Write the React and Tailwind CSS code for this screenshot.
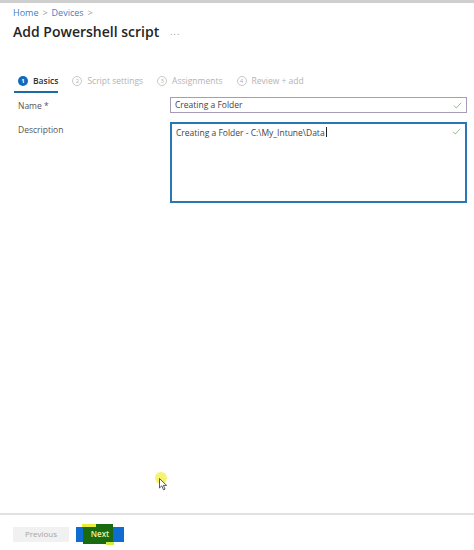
import React from 'react';

function Check() {
  return (
    <svg width="9" height="7" viewBox="0 0 9 7" className="shrink-0">
      <path d="M0.8 3.6 L3.3 6 L8.2 0.8" fill="none" stroke="#8fbf8f" strokeWidth="1" />
    </svg>
  );
}

function Step({ n, label, active }) {
  return (
    <div className="relative flex items-center gap-[5px] pb-[6px]">
      <span
        className={`flex h-[10px] w-[10px] items-center justify-center rounded-full text-[6px] leading-none ${
          active ? 'bg-[#0f6cbd] text-white font-bold' : 'border border-[#c8c8c8] text-[#b0b0b0]'
        }`}
      >
        {n}
      </span>
      <span className={active ? 'text-[#323130] font-semibold' : 'text-[#b3b3b3]'}>{label}</span>
      {active && <span className="absolute bottom-0 left-[-4px] right-0 h-[2px] bg-[#1a6aa8]" />}
    </div>
  );
}

export default function App() {
  return (
    <div className="flex h-[550px] w-[474px] flex-col bg-white font-['Open_Sans',sans-serif] text-[#323130]">
      <div className="h-[3px] bg-[#cfcfcf]" />

      <div className="px-[13px] pt-[3px]">
        <div className="flex items-center gap-[4px] text-[9px] text-[#3b7fc4]">
          <span>Home</span>
          <span className="text-[#9a9a9a]">&gt;</span>
          <span>Devices</span>
          <span className="text-[#9a9a9a]">&gt;</span>
        </div>
        <div className="mt-[1px] flex items-center gap-[11px]">
          <h1 className="text-[14px] font-semibold leading-[22px] text-[#252525]">Add Powershell script</h1>
          <span className="text-[9px] leading-none tracking-[1px] text-[#9a9a9a]">...</span>
        </div>
      </div>

      <div className="mt-[32px] flex gap-[14px] pl-[18px] text-[8.5px]">
        <Step n="1" label="Basics" active />
        <Step n="2" label="Script settings" />
        <Step n="3" label="Assignments" />
        <Step n="4" label="Review + add" />
      </div>

      <div className="mt-[4px] grid grid-cols-[152px_1fr] gap-y-[9px] pl-[18px] pr-[7px] text-[8.5px]">
        <label className="pt-[3px] text-[#555]">Name *</label>
        <div className="flex h-[16px] items-center justify-between border border-[#a59db5] px-[4px] text-[#444]">
          <span>Creating a Folder</span>
          <Check />
        </div>
        <label className="pt-[2px] text-[#555]">Description</label>
        <div className="flex h-[81px] items-start justify-between border-[2px] border-[#2878b8] px-[4px] pt-[2px] text-[#444]">
          <span>
            Creating a Folder - C:\My_Intune\Data<span className="ml-[1px] inline-block h-[10px] w-px translate-y-[1px] bg-[#222]" />
          </span>
          <span className="pt-[2px]">
            <Check />
          </span>
        </div>
      </div>

      <div className="relative flex-1">
        <span className="absolute left-[155px] top-[269px] h-[12px] w-[12px] rounded-full bg-[#f4f04a]/80" />
        <svg className="absolute left-[159px] top-[275px]" width="9" height="13" viewBox="0 0 9 13">
          <path d="M0.5 0.5 L0.5 10 L2.8 7.8 L4.5 11.8 L6 11.2 L4.4 7.4 L7.6 7.4 Z" fill="#fff" stroke="#333" strokeWidth="0.8" />
        </svg>
      </div>

      <div className="h-[2px] bg-[#e1e1e1]" />
      <div className="flex h-[35px] items-center gap-[7px] px-[13px] pt-[3px] text-[8px]">
        <button className="h-[15px] w-[56px] bg-[#f1f1f1] text-[#a5a5a5]">Previous</button>
        <button className="relative h-[15px] w-[48px] bg-[#0f6cd0] font-semibold">
          <span className="absolute left-[7px] top-[-3px] h-[20px] w-[30px] bg-[#1a6a10]" />
          <span className="absolute left-[6px] top-[-3px] h-[3px] w-[14px] bg-[#e6ee3a]" />
          <span className="absolute left-[30px] bottom-[-3px] h-[3px] w-[8px] bg-[#d8ea3a]" />
          <span className="relative text-[#e9f3a0]">Next</span>
        </button>
      </div>
    </div>
  );
}
